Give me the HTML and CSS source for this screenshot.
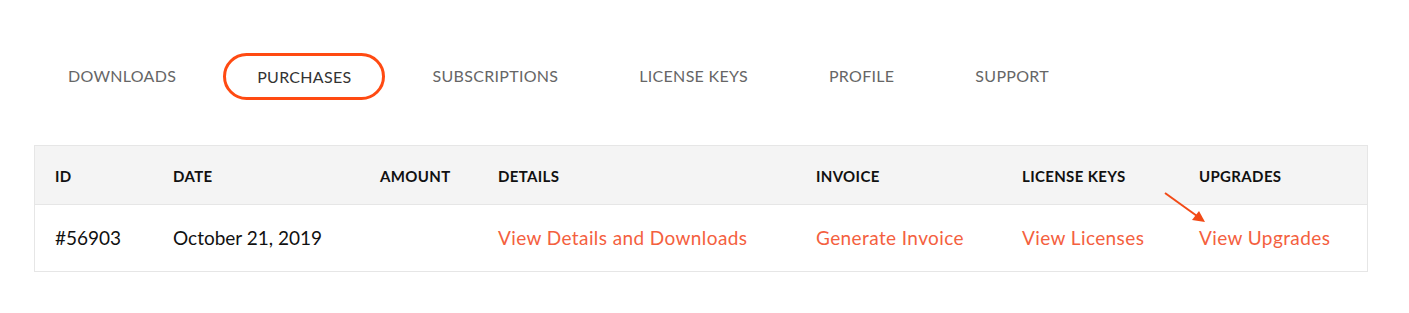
FILE: index.html
```html
<!DOCTYPE html>
<html lang="en">
<head>
    <meta charset="UTF-8">
    <title>Account</title>
    <link rel="stylesheet" href="styles.css">
</head>
<body>
    <div class="wrapper">
        <nav class="tabs">
            <a href="" class="tab">DOWNLOADS</a>
            <a href="" class="tab active">PURCHASES</a>
            <a href="" class="tab">SUBSCRIPTIONS</a>
            <a href="" class="tab">LICENSE KEYS</a>
            <a href="" class="tab">PROFILE</a>
            <a href="" class="tab">SUPPORT</a>
        </nav>

        <div class="table-box">
            <table class="purchases">
                <thead>
                    <tr>
                        <th class="c-id">ID</th>
                        <th class="c-date">DATE</th>
                        <th class="c-amount">AMOUNT</th>
                        <th class="c-details">DETAILS</th>
                        <th class="c-invoice">INVOICE</th>
                        <th class="c-keys">LICENSE KEYS</th>
                        <th class="c-upgrades">UPGRADES</th>
                    </tr>
                </thead>
                <tbody>
                    <tr>
                        <td class="plain">#56903</td>
                        <td class="plain">October 21, 2019</td>
                        <td></td>
                        <td><a href="">View Details and Downloads</a></td>
                        <td><a href="">Generate Invoice</a></td>
                        <td><a href="">View Licenses</a></td>
                        <td class="upgrade-cell">
                            <!-- annotation arrow -->
                            <svg class="arrow" width="48" height="36" viewBox="0 0 48 36">
                                <line x1="2" y1="2" x2="34" y2="25" stroke="#f24a16" stroke-width="2"/>
                                <polygon points="42,31 29,29 36,20" fill="#f24a16"/>
                            </svg>
                            <a href="">View Upgrades</a>
                        </td>
                    </tr>
                </tbody>
            </table>
        </div>
    </div>
</body>
</html>
```

FILE: styles.css
```css
*{box-sizing: border-box;}
body{margin:0;font-family: Lato, "Open Sans", sans-serif;background:#fff;}
a{text-decoration: none;}

.wrapper{
    padding: 53px 41px 0 34px;
}

.tabs{
    display:flex;
    gap:13px;
    align-items:center;
}
.tabs .tab{
    display:block;
    height:47px;
    line-height:39px;
    padding:0 31px;
    border:3px solid transparent;
    border-radius:24px;
    color:#666;
    font-size:16px;
    letter-spacing:0.3px;
}
.tabs .tab.active{
    border-color:#ff4a12;
    color:#333;
    line-height:41px;
}

.table-box{
    margin-top:45px;
    border:1px solid #e6e6e6;
}
table.purchases{
    width:100%;
    border-collapse: collapse;
    table-layout: fixed;
}
table.purchases th{
    background:#f4f4f4;
    height:58px;
    text-align:left;
    padding:2px 0 0 20px;
    font-size:15px;
    font-weight:700;
    letter-spacing:0.35px;
    color:#111;
    border-bottom:1px solid #e6e6e6;
}
table.purchases td{
    height:67px;
    padding:0 0 1px 20px;
    font-size:19px;
    letter-spacing:0.4px;
    color:#111;
}
table.purchases td.plain{
    letter-spacing:0;
}
table.purchases td a{
    color:#f4603e;
}
.c-id{width:118px;}
.c-date{width:207px;}
.c-amount{width:118px;}
.c-details{width:318px;}
.c-invoice{width:206px;}
.c-keys{width:177px;}

.upgrade-cell{position:relative;}
.upgrade-cell .arrow{
    position:absolute;
    left:-16px;
    top:-14px;
}
```
